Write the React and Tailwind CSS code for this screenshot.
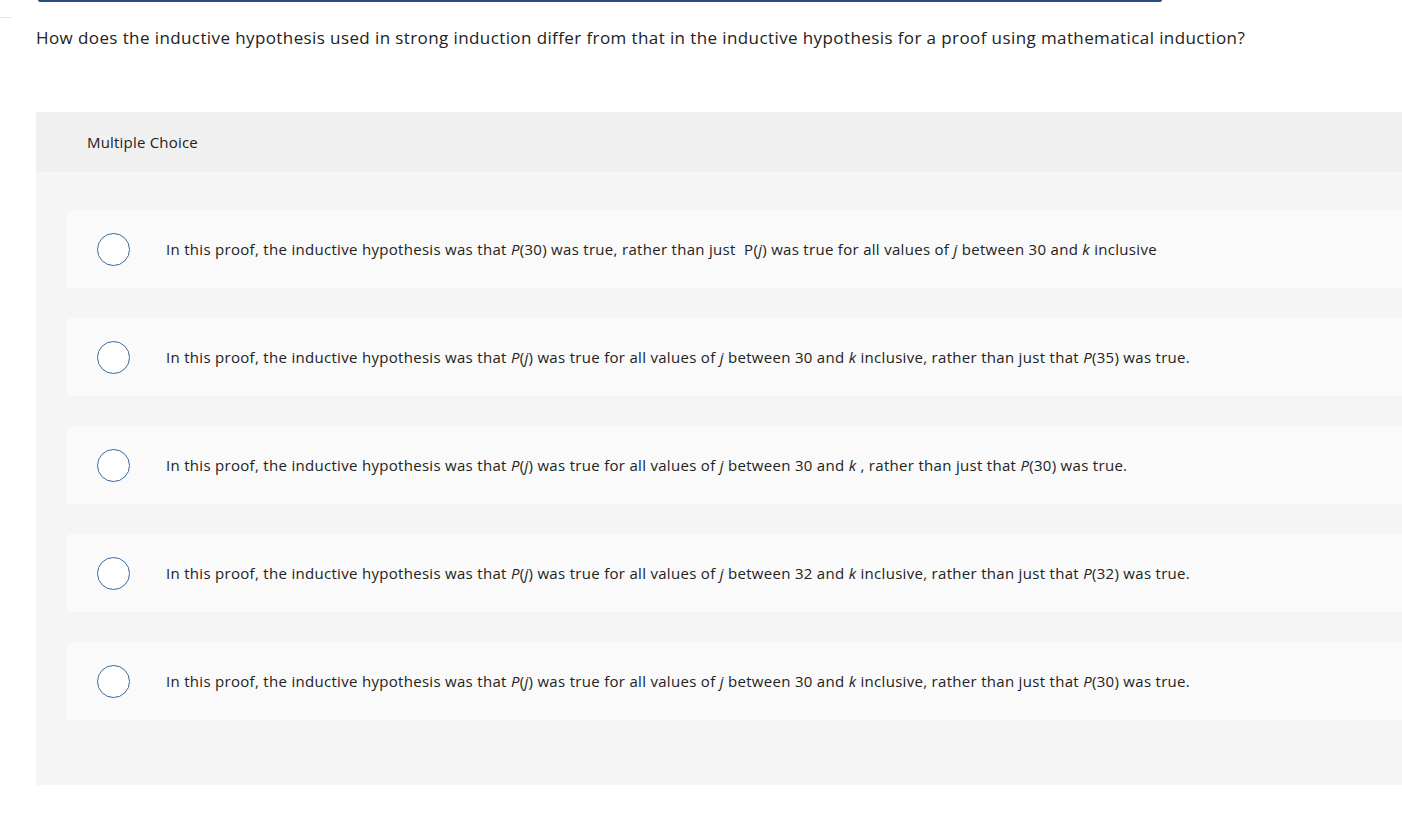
import React from 'react';

const options = [
  <>In this proof, the inductive hypothesis was that <i>P</i>(30) was true, rather than just&nbsp; P(<i>j</i>) was true for all values of <i>j</i> between 30 and <i>k</i> inclusive</>,
  <>In this proof, the inductive hypothesis was that <i>P</i>(<i>j</i>) was true for all values of <i>j</i> between 30 and <i>k</i> inclusive, rather than just that <i>P</i>(35) was true.</>,
  <>In this proof, the inductive hypothesis was that <i>P</i>(<i>j</i>) was true for all values of <i>j</i> between 30 and <i>k</i> , rather than just that <i>P</i>(30) was true.</>,
  <>In this proof, the inductive hypothesis was that <i>P</i>(<i>j</i>) was true for all values of <i>j</i> between 32 and <i>k</i> inclusive, rather than just that <i>P</i>(32) was true.</>,
  <>In this proof, the inductive hypothesis was that <i>P</i>(<i>j</i>) was true for all values of <i>j</i> between 30 and <i>k</i> inclusive, rather than just that <i>P</i>(30) was true.</>,
];

const App = () => {
  return (
    <div className="min-h-screen bg-white font-['Open_Sans',sans-serif] text-[#222] overflow-hidden">
      {/* bottom edge of the box above */}
      <div className="ml-[38px] w-[1124px] h-[2px] border-b-2 border-x border-[#2a4d7a] rounded-b-sm" />
      <div className="mt-[15px] h-px w-3 bg-gray-200" />
      <h1 className="mt-[8px] ml-[36px] text-[17px] leading-6 tracking-[0.4px]">
        How does the inductive hypothesis used in strong induction differ from that in the inductive hypothesis for a proof using mathematical induction?
      </h1>

      <div className="mt-[62px] ml-[36px] rounded-tl-sm bg-[#f5f5f5]">
        <div className="h-[60px] flex items-center pl-[51px] bg-[#f0f0f0] text-[15px] tracking-[0.2px]">
          Multiple Choice
        </div>
        <div className="pl-[31px] pt-[38px] pb-[65px] flex flex-col gap-[30px]">
          {options.map((opt, i) => (
            <div key={i} className="h-[78px] flex items-center pl-[30px] bg-[#fafafa] rounded-l">
              <span className="w-[33px] h-[33px] shrink-0 rounded-full border-[1.5px] border-[#3b6a9c] bg-white" />
              <p className="ml-[36px] text-[15px] tracking-[0.3px]">{opt}</p>
            </div>
          ))}
        </div>
      </div>
    </div>
  );
};

export default App;
